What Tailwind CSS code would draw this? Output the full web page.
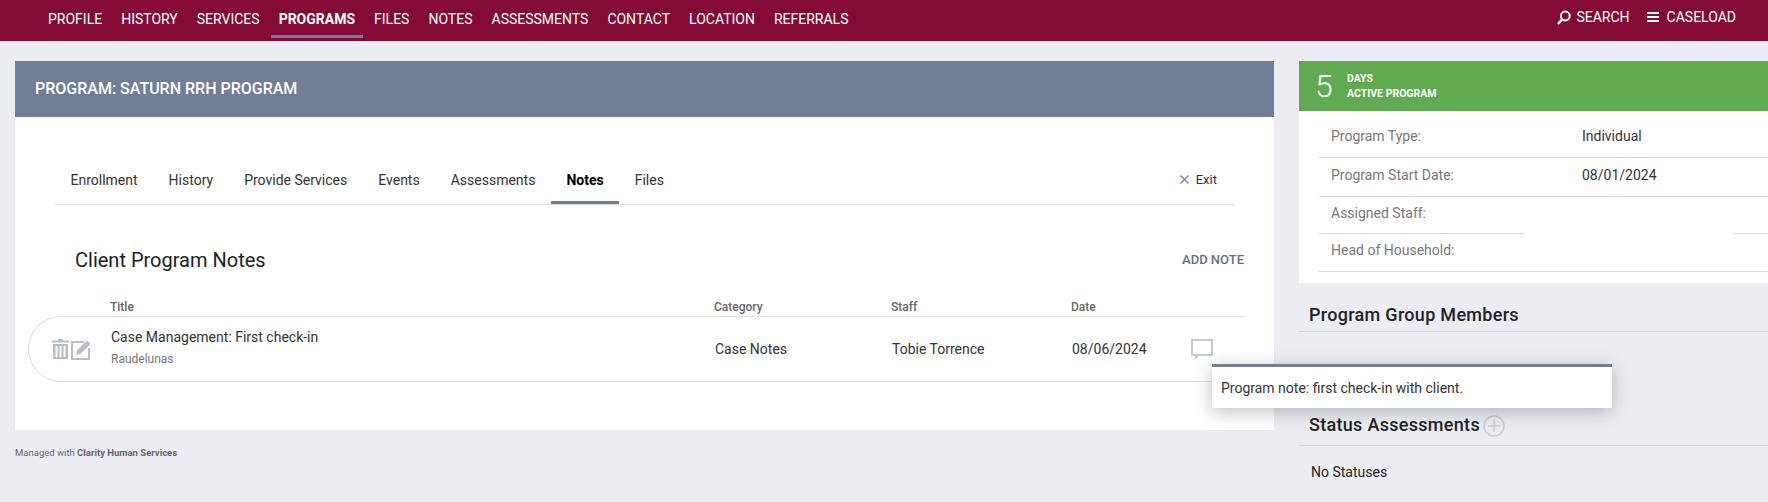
<!DOCTYPE html>
<html lang="en">
<head>
    <meta charset="UTF-8">
    <title>Client Program Notes</title>
    <script src="https://cdn.jsdelivr.net/npm/@tailwindcss/browser@4"></script>
</head>
<body class="bg-[#ecedf2] font-['Roboto',sans-serif] text-[14px] text-[#333] overflow-hidden">
    <div class="relative h-[502px] w-[1768px] overflow-hidden">
        <!-- Top nav -->
        <nav class="h-[41px] bg-[#830a34] text-white flex justify-between pl-[40px] pr-[32px]">
            <div class="flex gap-[3px]">
                <a class="px-[8px] h-[38px] flex items-center">PROFILE</a>
                <a class="px-[8px] h-[38px] flex items-center">HISTORY</a>
                <a class="px-[8px] h-[38px] flex items-center">SERVICES</a>
                <a class="px-[8px] h-[38px] flex items-center font-bold border-b-[3px] border-[#707e96] pt-[3px]">PROGRAMS</a>
                <a class="px-[8px] h-[38px] flex items-center">FILES</a>
                <a class="px-[8px] h-[38px] flex items-center">NOTES</a>
                <a class="px-[8px] h-[38px] flex items-center">ASSESSMENTS</a>
                <a class="px-[8px] h-[38px] flex items-center">CONTACT</a>
                <a class="px-[8px] h-[38px] flex items-center">LOCATION</a>
                <a class="px-[8px] h-[38px] flex items-center">REFERRALS</a>
            </div>
            <div class="flex items-center h-[34px] gap-[17px]">
                <a class="flex items-center gap-[5px]">
                    <svg class="w-[14px] h-[15px]" viewBox="0 0 14 15" fill="none" stroke="white"><circle cx="8.3" cy="6" r="4.4" stroke-width="2"/><path d="M5 9.5 L1 14" stroke-width="2.4"/></svg>
                    SEARCH
                </a>
                <a class="flex items-center gap-[8px]">
                    <svg class="w-[12px] h-[10px]" viewBox="0 0 12 10" fill="white"><rect width="12" height="2"/><rect y="4" width="12" height="2"/><rect y="8" width="12" height="2"/></svg>
                    CASELOAD
                </a>
            </div>
        </nav>

        <main class="flex pl-[15px] pt-[20px]">
            <!-- Left column -->
            <section class="w-[1259px] shrink-0">
                <div class="bg-white h-[369px]">
                    <h1 class="h-[56px] bg-[#707e96] text-white text-[16px] font-medium pl-[20px] flex items-center">PROGRAM: SATURN RRH PROGRAM</h1>
                    <div class="px-[40px] pt-[40px]">
                        <div class="flex justify-between border-b border-[#dcdcdc] h-[48px]">
                            <div class="flex">
                                <a class="px-[15.5px] flex items-center">Enrollment</a>
                                <a class="px-[15.5px] flex items-center">History</a>
                                <a class="px-[15.5px] flex items-center">Provide Services</a>
                                <a class="px-[15.5px] flex items-center">Events</a>
                                <a class="px-[15.5px] flex items-center">Assessments</a>
                                <a class="px-[15.5px] flex items-center font-bold text-black border-b-[3px] border-[#707e96] pt-[3px]">Notes</a>
                                <a class="px-[15.5px] flex items-center">Files</a>
                            </div>
                            <a class="flex items-center gap-[7px] pr-[17px] pb-[2px] text-[13px]">
                                <svg class="w-[9px] h-[9px]" viewBox="0 0 9 9" stroke="#8a93a6" stroke-width="1.6"><path d="M0.5 0.5 L8.5 8.5 M8.5 0.5 L0.5 8.5"/></svg>
                                Exit
                            </a>
                        </div>
                    </div>
                    <div class="flex justify-between items-center pl-[60px] pr-[30px] h-[32px] mt-[39px]">
                        <h2 class="text-[20px] text-[#222]">Client Program Notes</h2>
                        <a class="text-[13px] font-medium text-[#5f6f8c]">ADD NOTE</a>
                    </div>
                    <!-- Notes table -->
                    <div class="ml-[13px] mr-[30px] mt-[22px]">
                        <div class="grid grid-cols-[82px_604px_177px_180px_1fr] h-[18px] text-[12px] font-medium text-[#666] items-center">
                            <span></span><span>Title</span><span>Category</span><span>Staff</span><span>Date</span>
                        </div>
                        <div class="grid grid-cols-[82px_604px_177px_180px_1fr] items-center h-[66px] border border-r-0 border-[#dcdcdc] rounded-l-[33px]">
                            <div class="flex items-center pl-[23px] gap-[2px]">
                                <svg class="w-[17px] h-[20px]" viewBox="0 0 17 20" fill="#b8bdc9"><path d="M6 0h5v1.5h6V3.5H0V1.5h6z"/><path fill-rule="evenodd" d="M1 5h15v15H1z M3.5 7v11h2V7z M7.5 7v11h2V7z M11.5 7v11h2V7z"/></svg>
                                <svg class="w-[21px] h-[21px]" viewBox="0 0 21 21" fill="none"><path d="M13 3H1v17h17V9" stroke="#b8bdc9" stroke-width="2"/><path d="M5 16l1-4.5L16 1.5 19.5 5 9.5 15z" fill="#b8bdc9"/></svg>
                            </div>
                            <div class="-mt-[3px]">
                                <div class="leading-[22px] text-[#333]">Case Management: First check-in</div>
                                <div class="text-[12px] leading-[22px] text-[#777]">Raudelunas</div>
                            </div>
                            <div>Case Notes</div>
                            <div>Tobie Torrence</div>
                            <div class="flex items-center">
                                <span class="w-[119px]">08/06/2024</span>
                                <svg class="w-[22px] h-[20px] -mt-[1px]" viewBox="0 0 22 20" fill="none"><path d="M1 1h20v15H7l-2 3v-3H1z" stroke="#c6cad4" stroke-width="2"/></svg>
                            </div>
                        </div>
                    </div>
                </div>
                <p class="mt-[16px] text-[9.5px] text-[#666]">Managed with <b class="font-bold">Clarity Human Services</b></p>
            </section>

            <!-- Right column -->
            <aside class="ml-[25px] w-[469px] shrink-0">
                <div class="h-[50px] bg-[#60ab4f] text-white flex items-center pl-[16px]">
                    <span class="text-[32px] font-light w-[32px] leading-none">5</span>
                    <div class="text-[10.5px] font-bold leading-[15px]">
                        <div>DAYS</div>
                        <div>ACTIVE PROGRAM</div>
                    </div>
                </div>
                <div class="bg-white h-[172px] pl-[20px]">
                    <div class="grid grid-cols-[205px_210px_1fr] grid-rows-[47px_39px_37px_38px] items-end">
                        <div class="h-full flex items-end pl-[12px] pb-[10px] border-b border-[#d5d7dd] text-[#777]">Program Type:</div>
                        <div class="h-full flex items-end pl-[58px] pb-[10px] border-b border-[#d5d7dd]">Individual</div>
                        <div class="h-full border-b border-[#d5d7dd]"></div>
                        <div class="h-full flex items-end pl-[12px] pb-[10px] border-b border-[#d5d7dd] text-[#777]">Program Start Date:</div>
                        <div class="h-full flex items-end pl-[58px] pb-[10px] border-b border-[#d5d7dd]">08/01/2024</div>
                        <div class="h-full border-b border-[#d5d7dd]"></div>
                        <div class="h-full flex items-end pl-[12px] pb-[9px] border-b border-[#d5d7dd] text-[#777]">Assigned Staff:</div>
                        <div class="h-full"></div>
                        <div class="h-full border-b border-[#d5d7dd]"></div>
                        <div class="h-full flex items-end pl-[12px] pb-[10px] border-b border-[#d5d7dd] text-[#777]">Head of Household:</div>
                        <div class="h-full border-b border-[#d5d7dd]"></div>
                        <div class="h-full border-b border-[#d5d7dd]"></div>
                    </div>
                </div>
                <h3 class="h-[49px] border-b border-[#d5d7dd] pl-[10px] pt-[21px] text-[18px] leading-[22px] font-medium tracking-[0.3px] text-[#222]">Program Group Members</h3>
                <div class="h-[114px] border-b border-[#d5d7dd] pl-[10px] flex items-end gap-[3px] pb-[8px]">
                    <h3 class="text-[18px] leading-[22px] font-medium tracking-[0.3px] text-[#222] mb-[1px]">Status Assessments</h3>
                    <svg class="w-[22px] h-[22px]" viewBox="0 0 22 22" fill="none" stroke="#c8cbd4" stroke-width="1.5"><circle cx="11" cy="11" r="10"/><path d="M11 5v12M5 11h12"/></svg>
                </div>
                <p class="pl-[12px] pt-[16px] text-[#222]">No Statuses</p>
            </aside>
        </main>

        <!-- Note popover -->
        <div class="absolute left-[1212px] top-[364px] w-[400px] h-[44px] bg-white border-t-[3px] border-[#707e96] shadow-[0_4px_18px_rgba(40,45,60,0.3)] pl-[9px] pt-[11px] text-[#333] text-[14px]">Program note: first check-in with client.</div>
    </div>
</body>
</html>
